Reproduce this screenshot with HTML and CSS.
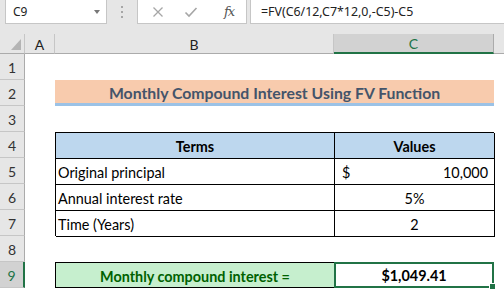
FILE: index.html
```html
<!DOCTYPE html>
<html>
<head>
<meta charset="utf-8">
<link rel="stylesheet" href="styles.css">
</head>
<body>
<div class="toolbar">
  <div class="namebox"><span class="ref">C9</span><span class="caret"></span></div>
  <div class="dots"><i></i><i></i><i></i></div>
  <div class="fxbox">
    <svg class="ico" width="12" height="12" viewBox="0 0 12 12"><path d="M1.5 1.5 L10.5 10.5 M10.5 1.5 L1.5 10.5" stroke="#a6a6a6" stroke-width="1.3" fill="none"/></svg>
    <svg class="ico" width="14" height="12" viewBox="0 0 14 12"><path d="M1.5 6.5 L5 10 L12.5 2" stroke="#a6a6a6" stroke-width="1.6" fill="none"/></svg>
    <span class="fx">fx</span>
  </div>
  <div class="formula">=FV(C6/12,C7*12,0,-C5)-C5</div>
</div>
<div class="sheet">
  <div class="corner"><span class="tri"></span></div>
  <div class="colhead">A</div>
  <div class="colhead">B</div>
  <div class="colhead sel">C</div>
  <div class="colhead rest"></div>

  <div class="rowhead r1">1</div>
  <div class="rowhead r2">2</div>
  <div class="rowhead r3">3</div>
  <div class="rowhead r4">4</div>
  <div class="rowhead r5">5</div>
  <div class="rowhead r6">6</div>
  <div class="rowhead r7">7</div>
  <div class="rowhead r8">8</div>
  <div class="rowhead r9 sel">9</div>

  <div class="title">Monthly Compound Interest Using FV Function</div>

  <div class="table">
    <div class="th">Terms</div>
    <div class="th">Values</div>
    <div class="td">Original principal</div>
    <div class="td money"><span>$</span><span>10,000</span></div>
    <div class="td">Annual interest rate</div>
    <div class="td center">5%</div>
    <div class="td">Time (Years)</div>
    <div class="td center">2</div>
  </div>

  <div class="result-label">Monthly compound interest =</div>
  <div class="result-value">$1,049.41<span class="handle"></span></div>
</div>
</body>
</html>
```

FILE: styles.css
```css
html, body {
  margin: 0;
  padding: 0;
  background: #ffffff;
  overflow: hidden;
}
body {
  width: 504px;
  height: 290px;
  font-family: "Lato", "Liberation Sans", sans-serif;
}

/* ---------- formula bar ---------- */
.toolbar {
  height: 34px;
  background: #e6e6e6;
  display: flex;
  align-items: flex-start;
  box-sizing: border-box;
}
.namebox {
  margin-left: 5px;
  width: 102px;
  height: 24px;
  box-sizing: border-box;
  background: #fff;
  border: 1px solid #c6c6c6;
  border-top: none;
  display: flex;
  align-items: center;
  justify-content: space-between;
  padding: 0 6px 0 7px;
  font-family: "Noto Sans", "Open Sans", sans-serif;
  font-size: 12px;
  color: #222;
}
.caret {
  width: 0;
  height: 0;
  border-left: 3.5px solid transparent;
  border-right: 3.5px solid transparent;
  border-top: 4px solid #777;
}
.dots {
  width: 30px;
  height: 24px;
  display: flex;
  flex-direction: column;
  align-items: center;
  justify-content: center;
  gap: 3px;
}
.dots i {
  display: block;
  width: 2px;
  height: 2px;
  background: #a6a6a6;
}
.fxbox {
  width: 110px;
  height: 24px;
  box-sizing: border-box;
  background: #fff;
  border: 1px solid #c6c6c6;
  border-top: none;
  display: flex;
  align-items: center;
  padding-left: 14px;
  gap: 20px;
}
.fx {
  font-family: "DejaVu Serif", "Liberation Serif", serif;
  font-style: italic;
  font-size: 13px;
  color: #555;
  margin-left: 6px;
  letter-spacing: -1px;
}
.formula {
  flex: 1;
  margin-left: 3px;
  height: 24px;
  box-sizing: border-box;
  background: #fff;
  border-left: 1px solid #c6c6c6;
  border-bottom: 1px solid #c6c6c6;
  padding-left: 10px;
  display: flex;
  align-items: center;
  font-family: "Noto Sans", "Open Sans", sans-serif;
  font-size: 12.4px;
  color: #222;
}

/* ---------- sheet ---------- */
.sheet {
  display: grid;
  grid-template-columns: 25px 30px 279px 160px 10px;
  grid-template-rows: 20px repeat(9, 26px);
  font-size: 14.4px;
  color: #000;
}
.corner, .colhead {
  background: #e6e6e6;
  border-bottom: 1px solid #ababab;
  box-sizing: border-box;
}
.corner {
  border-right: 1px solid #c6c6c6;
  position: relative;
}
.tri {
  position: absolute;
  right: 3px;
  bottom: 3px;
  width: 10px;
  height: 11px;
  background: #b4b4b4;
  clip-path: polygon(100% 0, 100% 100%, 0 100%);
}
.colhead {
  border-right: 1px solid #c6c6c6;
  display: flex;
  align-items: center;
  justify-content: center;
  font-size: 14px;
  color: #222;
  padding-top: 1px;
}
.colhead.sel {
  background: #d2d2d2;
  border-bottom: 2px solid #217346;
  border-right: 1px solid #ababab;
  color: #217346;
}
.colhead.rest {
  border-right: none;
}
.rowhead {
  grid-column: 1;
  background: #e6e6e6;
  border-right: 1px solid #ababab;
  border-bottom: 1px solid #c6c6c6;
  box-sizing: border-box;
  display: flex;
  align-items: center;
  justify-content: center;
  font-size: 14px;
  color: #333;
  padding-top: 2px;
}
.rowhead.sel {
  background: #d2d2d2;
  border-right: 2px solid #217346;
  color: #217346;
}
.r1 { grid-row: 2; }
.r2 { grid-row: 3; }
.r3 { grid-row: 4; }
.r4 { grid-row: 5; }
.r5 { grid-row: 6; }
.r6 { grid-row: 7; }
.r7 { grid-row: 8; }
.r8 { grid-row: 9; }
.r9 { grid-row: 10; }

.title {
  grid-column: 3 / 5;
  grid-row: 3;
  background: #f8cbad;
  border-bottom: 3px solid #9bc2e6;
  box-sizing: border-box;
  display: flex;
  align-items: center;
  justify-content: center;
  font-weight: 700;
  font-size: 15.8px;
  color: #44546a;
  padding-top: 1px;
}

.table {
  grid-column: 3 / 5;
  grid-row: 5 / 9;
  display: grid;
  grid-template-columns: 279px 160px;
  grid-template-rows: repeat(4, 26px);
  border-top: 1px solid #000;
  border-left: 1px solid #000;
  box-sizing: border-box;
}
.th, .td {
  border-right: 1px solid #000;
  border-bottom: 1px solid #000;
  box-sizing: border-box;
  display: flex;
  align-items: center;
  padding-top: 2px;
}
.th {
  background: #bdd7ee;
  justify-content: center;
  font-weight: 700;
}
.td {
  padding-left: 2px;
}
.td.center {
  justify-content: center;
  padding-left: 0;
}
.td.money {
  justify-content: space-between;
  padding-left: 7px;
  padding-right: 6px;
}

.result-label {
  grid-column: 3;
  grid-row: 10;
  background: #c6efce;
  border: 1px solid #000;
  border-right: none;
  box-sizing: border-box;
  display: flex;
  align-items: center;
  justify-content: center;
  font-weight: 700;
  color: #006100;
  padding-top: 2px;
}
.result-value {
  grid-column: 4;
  grid-row: 10;
  position: relative;
  border: 2px solid #217346;
  box-sizing: border-box;
  display: flex;
  align-items: center;
  justify-content: center;
  font-weight: 700;
  padding-top: 1px;
}
.handle {
  position: absolute;
  right: -4px;
  bottom: -4px;
  width: 5px;
  height: 5px;
  background: #217346;
  border: 1px solid #fff;
}
```
